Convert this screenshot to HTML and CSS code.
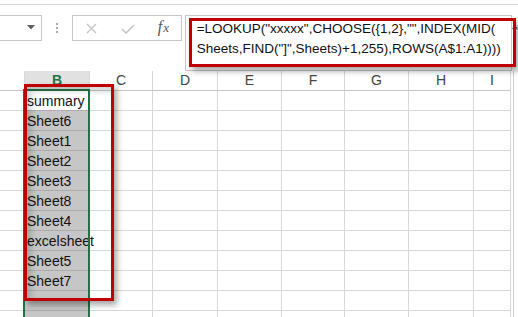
FILE: index.html
```html
<!DOCTYPE html>
<html>
<head>
<meta charset="utf-8">
<link rel="stylesheet" href="styles.css">
</head>
<body>
<div class="app">
  <div class="topline"></div>
  <div class="fbar">
    <div class="namebox">
      <svg class="caret" width="8" height="5" viewBox="0 0 8 5"><polygon points="0,0 8,0 4,4.5" fill="#5f5f5f"/></svg>
    </div>
    <div class="grip"><i></i><i></i><i></i></div>
    <div class="fxbox">
      <svg class="ico-x" width="11" height="11" viewBox="0 0 11 11"><path d="M1 1 L10 10 M10 1 L1 10" stroke="#c3c3c3" stroke-width="1.4" fill="none"/></svg>
      <svg class="ico-ok" width="14" height="10" viewBox="0 0 14 10"><path d="M1 5 L5 9 L13 1" stroke="#c3c3c3" stroke-width="1.5" fill="none"/></svg>
      <span class="fx">f<span class="fxx">x</span></span>
    </div>
    <div class="formula">
      <div class="ftext">=LOOKUP("xxxxx",CHOOSE({1,2},"",INDEX(MID(<br>Sheets,FIND("]",Sheets)+1,255),ROWS(A$1:A1))))</div>
    </div>
    <div class="fscroll">
      <svg width="6" height="5" viewBox="0 0 6 5"><path d="M0.5 4 L3 1 L5.5 4" stroke="#666" stroke-width="1.2" fill="none"/></svg>
    </div>
  </div>

  <div class="sheet">
    <div class="row head">
      <div class="h"></div><div class="h hsel">B</div><div class="h">C</div><div class="h">D</div><div class="h">E</div><div class="h">F</div><div class="h">G</div><div class="h">H</div><div class="h">I</div><div class="edge"></div>
    </div>
    <div class="row">
      <div class="c"></div><div class="c b active">summary</div><div class="c"></div><div class="c"></div><div class="c"></div><div class="c"></div><div class="c"></div><div class="c"></div><div class="c"></div><div class="edge"></div>
    </div>
    <div class="row">
      <div class="c"></div><div class="c b">Sheet6</div><div class="c"></div><div class="c"></div><div class="c"></div><div class="c"></div><div class="c"></div><div class="c"></div><div class="c"></div><div class="edge"></div>
    </div>
    <div class="row">
      <div class="c"></div><div class="c b">Sheet1</div><div class="c"></div><div class="c"></div><div class="c"></div><div class="c"></div><div class="c"></div><div class="c"></div><div class="c"></div><div class="edge"></div>
    </div>
    <div class="row">
      <div class="c"></div><div class="c b">Sheet2</div><div class="c"></div><div class="c"></div><div class="c"></div><div class="c"></div><div class="c"></div><div class="c"></div><div class="c"></div><div class="edge"></div>
    </div>
    <div class="row">
      <div class="c"></div><div class="c b">Sheet3</div><div class="c"></div><div class="c"></div><div class="c"></div><div class="c"></div><div class="c"></div><div class="c"></div><div class="c"></div><div class="edge"></div>
    </div>
    <div class="row">
      <div class="c"></div><div class="c b">Sheet8</div><div class="c"></div><div class="c"></div><div class="c"></div><div class="c"></div><div class="c"></div><div class="c"></div><div class="c"></div><div class="edge"></div>
    </div>
    <div class="row">
      <div class="c"></div><div class="c b">Sheet4</div><div class="c"></div><div class="c"></div><div class="c"></div><div class="c"></div><div class="c"></div><div class="c"></div><div class="c"></div><div class="edge"></div>
    </div>
    <div class="row">
      <div class="c"></div><div class="c b">excelsheet</div><div class="c"></div><div class="c"></div><div class="c"></div><div class="c"></div><div class="c"></div><div class="c"></div><div class="c"></div><div class="edge"></div>
    </div>
    <div class="row">
      <div class="c"></div><div class="c b">Sheet5</div><div class="c"></div><div class="c"></div><div class="c"></div><div class="c"></div><div class="c"></div><div class="c"></div><div class="c"></div><div class="edge"></div>
    </div>
    <div class="row">
      <div class="c"></div><div class="c b">Sheet7</div><div class="c"></div><div class="c"></div><div class="c"></div><div class="c"></div><div class="c"></div><div class="c"></div><div class="c"></div><div class="edge"></div>
    </div>
    <div class="row">
      <div class="c"></div><div class="c b"></div><div class="c"></div><div class="c"></div><div class="c"></div><div class="c"></div><div class="c"></div><div class="c"></div><div class="c"></div><div class="edge"></div>
    </div>
    <div class="row">
      <div class="c"></div><div class="c b"></div><div class="c"></div><div class="c"></div><div class="c"></div><div class="c"></div><div class="c"></div><div class="c"></div><div class="c"></div><div class="edge"></div>
    </div>
  </div>

  <div class="selection"></div>
  <div class="mark mark-formula"></div>
  <div class="mark mark-column"></div>
</div>
</body>
</html>
```

FILE: styles.css
```css
html, body {
  margin: 0;
  padding: 0;
  background: #fff;
}

.app {
  position: relative;
  width: 518px;
  height: 317px;
  overflow: hidden;
  background: #fff;
  font-family: "Liberation Sans", Arial, sans-serif;
  color: #000;
}

.topline {
  height: 4px;
  border-bottom: 1px solid #d6d6d6;
}

/* formula bar */
.fbar {
  display: flex;
  align-items: flex-start;
  height: 66px;
  padding-top: 10px;
  box-sizing: border-box;
}

.namebox {
  width: 43px;
  height: 26px;
  margin-left: -1px;
  border: 1px solid #c8c8c8;
  box-sizing: border-box;
  display: flex;
  align-items: center;
  justify-content: flex-end;
  padding-right: 6px;
}

.caret {
  display: block;
  margin-top: -2px;
}

.grip {
  width: 30px;
  display: flex;
  flex-direction: column;
  align-items: center;
  gap: 2px;
  padding-top: 8px;
}

.grip i {
  display: block;
  width: 2px;
  height: 2px;
  background: #a9a9a9;
}

.fxbox {
  width: 110px;
  height: 26px;
  border: 1px solid #c8c8c8;
  box-sizing: border-box;
  display: flex;
  align-items: center;
  padding-left: 13px;
}

.ico-x {
  display: block;
  margin-top: 1px;
}

.ico-ok {
  display: block;
  margin-left: 24px;
  margin-top: 1px;
}

.fx {
  margin-left: 23px;
  font-family: "Liberation Serif", "Times New Roman", serif;
  font-style: italic;
  font-size: 16px;
  color: #555;
  line-height: 1;
  margin-top: -2px;
}

.fxx {
  font-size: 13px;
  margin-left: 1px;
}

.formula {
  margin-left: 3px;
  width: 328px;
  height: 56px;
  border: 1px solid #c8c8c8;
  box-sizing: border-box;
  padding: 3px 0 0 11px;
}

.ftext {
  font-size: 13.5px;
  line-height: 20px;
  white-space: nowrap;
  color: #111;
}

.fscroll {
  flex: 1;
  display: flex;
  justify-content: flex-end;
  padding-top: 10px;
}

.fscroll svg {
  display: block;
}

/* sheet grid */
.row {
  display: grid;
  grid-template-columns: 25px 65px 63px 65px 64px 63px 64px 65px 37px 7px;
  height: 20px;
}

.c, .h {
  box-sizing: border-box;
  border-right: 1px solid #d8d8d8;
  border-bottom: 1px solid #d8d8d8;
  height: 20px;
  font-size: 14px;
  line-height: 20px;
  white-space: nowrap;
}

.h {
  text-align: center;
  color: #444;
  line-height: 19px;
}

.head .h {
  border-bottom-color: #c6c6c6;
}

.hsel {
  background: #e1e1e1;
  color: #217346;
  font-weight: bold;
}

.c {
  padding-left: 2px;
  line-height: 20px;
  color: #111;
}

.c.b {
  background: #c6c6c6;
  border-bottom-color: #acacac;
  border-right-color: #c6c6c6;
}

.c.b.active {
  background: #fff;
}

.edge {
  margin-left: 2px;
  border-left: 1px solid #cfcfcf;
  height: 20px;
}

/* overlays */
.selection {
  position: absolute;
  left: 23px;
  top: 89px;
  width: 67px;
  height: 260px;
  border: 2px solid #217346;
  box-sizing: border-box;
}

.mark {
  position: absolute;
  border: 3px solid #c00000;
  box-sizing: border-box;
  box-shadow: 3px 4px 6px rgba(0, 0, 0, 0.35);
}

.mark-formula {
  left: 189px;
  top: 18px;
  width: 327px;
  height: 49px;
}

.mark-column {
  left: 24px;
  top: 84px;
  width: 90px;
  height: 217px;
  box-shadow: 3px 4px 6px rgba(0, 0, 0, 0.35), inset 4px 4px 6px rgba(0, 0, 0, 0.18);
}
```
